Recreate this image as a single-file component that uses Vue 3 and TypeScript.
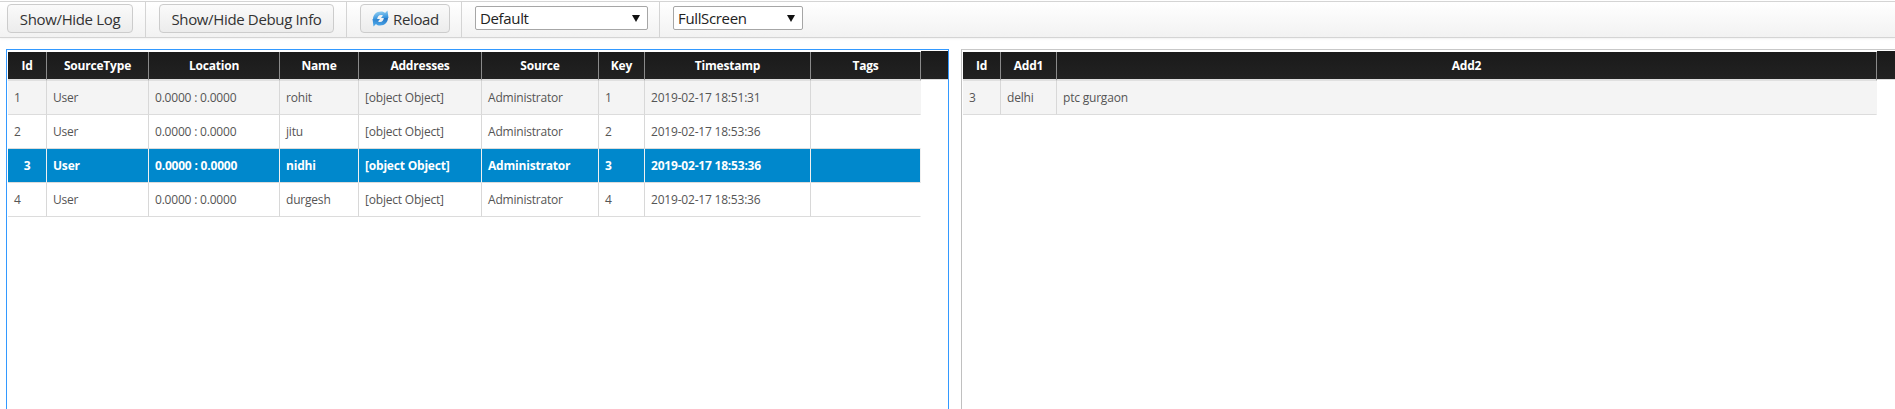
<template>
  <div class="page">
    <div class="toolbar">
      <div class="tool-group">
        <button class="btn btn-log">Show/Hide Log</button>
      </div>
      <div class="tool-group">
        <button class="btn btn-debug">Show/Hide Debug Info</button>
      </div>
      <div class="tool-group group-tight">
        <button class="btn btn-reload">
          <svg class="reload-icon" width="17" height="17" viewBox="0 0 17 17">
            <defs>
              <linearGradient id="reloadTop" x1="0" y1="0" x2="0.3" y2="1">
                <stop offset="0" stop-color="#a6dcf7" />
                <stop offset="1" stop-color="#2f8fdc" />
              </linearGradient>
              <linearGradient id="reloadBottom" x1="0" y1="1" x2="0.3" y2="0">
                <stop offset="0" stop-color="#1f6fc0" />
                <stop offset="1" stop-color="#4ba6e8" />
              </linearGradient>
            </defs>
            <path transform="rotate(180 8.500 8.500)" d="M1 9.500C1 5 4 1.500 9 1.500c2 0 3 .5 4 1.500L15.500.5 16.500 8H9l2-2.500C10 5 9.500 5 9 5 6.500 5 5.500 7 5 9.500z" fill="url(#reloadBottom)" />
            <path d="M1 9.500C1 5 4 1.500 9 1.500c2 0 3 .5 4 1.500L15.500.5 16.500 8H9l2-2.500C10 5 9.500 5 9 5 6.500 5 5.500 7 5 9.500z" fill="url(#reloadTop)" />
          </svg>
          Reload
        </button>
      </div>
      <div class="tool-group group-tight">
        <div class="select select-layout">
          <span>Default</span>
          <i class="arrow"></i>
        </div>
      </div>
      <div class="tool-group last">
        <div class="select select-screen">
          <span>FullScreen</span>
          <i class="arrow"></i>
        </div>
      </div>
    </div>

    <div class="panels">
      <div class="panel panel-main">
        <div class="table-wrap">
          <table class="grid">
            <colgroup>
              <col v-for="w in mainWidths" :key="w.name" :style="{ width: w.width + 'px' }" />
            </colgroup>
            <thead>
              <tr>
                <th v-for="w in mainWidths" :key="w.name">{{ w.name }}</th>
              </tr>
            </thead>
            <tbody>
              <tr v-for="(row, i) in rows" :key="row.id" :class="{ odd: i % 2 === 0, selected: row.id === 3 }">
                <td class="id-cell">{{ row.id }}</td>
                <td>User</td>
                <td>0.0000 : 0.0000</td>
                <td>{{ row.name }}</td>
                <td>[object Object]</td>
                <td>Administrator</td>
                <td>{{ row.id }}</td>
                <td>{{ row.time }}</td>
                <td></td>
              </tr>
            </tbody>
          </table>
          <div class="head-filler"></div>
        </div>
      </div>

      <div class="panel panel-detail">
        <div class="table-wrap">
          <table class="grid">
            <colgroup>
              <col v-for="w in detailWidths" :key="w.name" :style="{ width: w.width + 'px' }" />
            </colgroup>
            <thead>
              <tr>
                <th v-for="w in detailWidths" :key="w.name">{{ w.name }}</th>
              </tr>
            </thead>
            <tbody>
              <tr class="odd">
                <td>3</td>
                <td>delhi</td>
                <td>ptc gurgaon</td>
              </tr>
            </tbody>
          </table>
          <div class="head-filler"></div>
        </div>
      </div>
    </div>
  </div>
</template>

<script setup lang="ts">
interface Row {
  id: number
  name: string
  time: string
}

const mainWidths = [
  { name: 'Id', width: 39 },
  { name: 'SourceType', width: 102 },
  { name: 'Location', width: 131 },
  { name: 'Name', width: 79 },
  { name: 'Addresses', width: 123 },
  { name: 'Source', width: 117 },
  { name: 'Key', width: 46 },
  { name: 'Timestamp', width: 166 },
  { name: 'Tags', width: 110 },
]

const detailWidths = [
  { name: 'Id', width: 38 },
  { name: 'Add1', width: 56 },
  { name: 'Add2', width: 820 },
]

const rows: Row[] = [
  { id: 1, name: 'rohit', time: '2019-02-17 18:51:31' },
  { id: 2, name: 'jitu', time: '2019-02-17 18:53:36' },
  { id: 3, name: 'nidhi', time: '2019-02-17 18:53:36' },
  { id: 4, name: 'durgesh', time: '2019-02-17 18:53:36' },
]
</script>

<style>
html,
body {
  margin: 0;
  background: #fff;
  overflow: hidden;
}
</style>

<style scoped>
.page {
  width: 1895px;
  height: 409px;
  font-family: "Open Sans", "Noto Sans", sans-serif;
  color: #333;
  background: #fff;
}

.toolbar {
  box-sizing: border-box;
  height: 37px;
  margin-top: 1px;
  display: flex;
  align-items: stretch;
  border-top: 1px solid #d4d4d4;
  border-bottom: 1px solid #d4d4d4;
  background: linear-gradient(#fff, #f2f2f2);
  box-shadow: 0 1px 2px rgba(0, 0, 0, 0.06);
}

.tool-group {
  box-sizing: border-box;
  display: flex;
  align-items: flex-start;
  padding: 2px 12px 0 7px;
  border-right: 1px solid #d4d4d4;
}

.tool-group + .tool-group {
  padding-left: 13px;
}

.tool-group.group-tight {
  padding-right: 11px;
}

.tool-group.last {
  border-right: 0;
}

.btn {
  box-sizing: border-box;
  height: 29px;
  padding: 0;
  display: flex;
  align-items: center;
  justify-content: center;
  gap: 4px;
  font-family: inherit;
  font-size: 15px;
  letter-spacing: -0.35px;
  color: #333;
  background: linear-gradient(#fafafa, #ececec);
  border: 1px solid #ccc;
  border-radius: 4px;
}

.btn-log {
  width: 126px;
}

.btn-debug {
  width: 175px;
}

.btn-reload {
  width: 90px;
  justify-content: flex-start;
  padding-left: 11px;
}

.select {
  box-sizing: border-box;
  height: 24px;
  margin-top: 2px;
  padding: 0 4px;
  display: flex;
  align-items: center;
  justify-content: space-between;
  font-size: 15px;
  letter-spacing: -0.35px;
  color: #222;
  background: #fff;
  border: 1px solid #a6a6a6;
  border-radius: 2px;
}

.select-layout {
  width: 173px;
}

.select-screen {
  width: 130px;
}

.arrow {
  margin-right: 3px;
  width: 0;
  height: 0;
  border-left: 4px solid transparent;
  border-right: 4px solid transparent;
  border-top: 7px solid #111;
}

.panels {
  display: flex;
  gap: 12px;
  margin-top: 11px;
  height: 360px;
  padding-left: 6px;
}

.panel {
  box-sizing: border-box;
  height: 100%;
  padding: 2px 0 0 1px;
}

.panel-main {
  width: 943px;
  flex: none;
  border: 1px solid #3399ff;
  border-bottom: 0;
}

.panel-detail {
  flex: 1;
  border-top: 1px solid #c8c8c8;
  border-left: 1px solid #c0c0c0;
}

.table-wrap {
  display: flex;
  align-items: flex-start;
}

.grid {
  border-collapse: separate;
  border-spacing: 0;
  table-layout: fixed;
  flex: none;
  font-size: 12px;
  letter-spacing: -0.2px;
}

.grid th {
  box-sizing: border-box;
  height: 29px;
  padding: 0;
  color: #fff;
  font-weight: 700;
  text-align: center;
  background: linear-gradient(#1a1a1a, #222);
  border-right: 1px solid #8a8a8a;
  border-bottom: 2px solid #e0e0e0;
}

.grid td {
  box-sizing: border-box;
  height: 34px;
  padding: 0 0 0 6px;
  color: #555;
  white-space: nowrap;
  border-right: 1px solid #d8d8d8;
  border-bottom: 1px solid #dcdcdc;
}

.grid td:last-child {
  border-right-color: transparent;
}

.grid tr.odd td {
  background: #f4f4f4;
}

.grid tr.selected td {
  color: #fff;
  font-weight: 700;
  background: #0088cc;
  border-right-color: #f0f0f0;
}

.grid tr.selected .id-cell {
  text-align: center;
  padding-left: 0;
}

.head-filler {
  flex: 1;
  height: 28px;
  margin-top: -1px;
  background: linear-gradient(#1a1a1a, #222);
  border-bottom: 1px solid #ddd;
}
</style>
